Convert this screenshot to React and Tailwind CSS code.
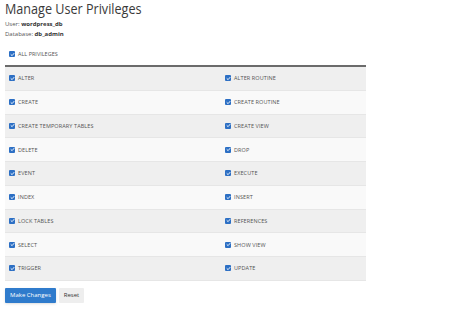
import React from "react";

const rows = [
  ["ALTER", "ALTER ROUTINE"],
  ["CREATE", "CREATE ROUTINE"],
  ["CREATE TEMPORARY TABLES", "CREATE VIEW"],
  ["DELETE", "DROP"],
  ["EVENT", "EXECUTE"],
  ["INDEX", "INSERT"],
  ["LOCK TABLES", "REFERENCES"],
  ["SELECT", "SHOW VIEW"],
  ["TRIGGER", "UPDATE"],
];

function Check() {
  return (
    <span className="inline-flex items-center justify-center w-[6px] h-[6px] rounded-[1px] bg-[#2c6fc4] shrink-0">
      <svg viewBox="0 0 10 10" className="w-[5px] h-[5px]">
        <path d="M2 5.2 L4.2 7.3 L8 2.8" fill="none" stroke="#fff" strokeWidth="1.8" strokeLinecap="round" strokeLinejoin="round" />
      </svg>
    </span>
  );
}

function Cell({ label }) {
  return (
    <div className="flex items-center gap-[3px] pl-[4px]">
      <Check />
      <span className="text-[5.5px] text-[#555] tracking-[0.1px]">{label}</span>
    </div>
  );
}

export default function App() {
  return (
    <div className="w-[474px] h-[310px] bg-white overflow-hidden pl-[5px] text-[#333]" style={{ fontFamily: '"Open Sans", sans-serif' }}>
      <h1 className="h-[18px] text-[14px] leading-[18px] font-normal text-[#3a3a3a] whitespace-nowrap origin-left scale-x-[0.9]">
        Manage User Privileges
      </h1>
      <div className="text-[6px] leading-[10px] mt-[1px] text-[#555]">
        User: <span className="font-bold text-[#333]">wordpress_db</span>
      </div>
      <div className="text-[6px] leading-[10px] text-[#555]">
        Database: <span className="font-bold text-[#333]">db_admin</span>
      </div>
      <div className="flex items-center gap-[3px] pl-[4px] h-[22px] mt-[4px]">
        <Check />
        <span className="text-[5.5px] text-[#555]">ALL PRIVILEGES</span>
      </div>
      <div className="w-[361px] border-t-[2px] border-[#6b6b6b]">
        {rows.map((r, i) => (
          <div
            key={i}
            className={`grid grid-cols-[216px_145px] h-[23.75px] border-b border-[#e6e6e6] ${i % 2 === 0 ? "bg-[#efefef]" : "bg-[#f9f9f9]"}`}
          >
            <Cell label={r[0]} />
            <Cell label={r[1]} />
          </div>
        ))}
      </div>
      <div className="flex items-center gap-[3px] mt-[7px]">
        <button className="h-[15px] px-[5px] bg-[#2f7bcc] text-white text-[6px] rounded-[1px] shadow-sm">Make Changes</button>
        <button className="h-[15px] px-[5px] bg-[#eeeeee] text-[#333] text-[6px] rounded-[1px]">Reset</button>
      </div>
    </div>
  );
}
